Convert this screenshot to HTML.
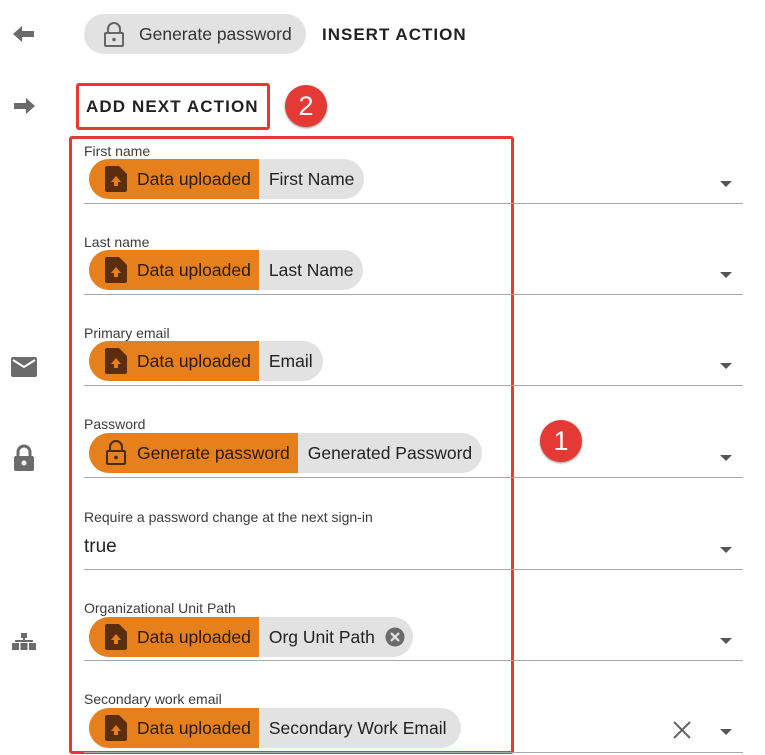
<!DOCTYPE html>
<html><head><style>
body{margin:0;width:765px;height:755px;background:#fff;font-family:"Liberation Sans",sans-serif;position:relative;overflow:hidden}
.a{position:absolute}
.lbl{position:absolute;left:84px;font-size:14px;color:#3c3c3c}
.line{position:absolute;left:84px;width:659px;height:1px;background:#a8a8a8}
.chip{position:absolute;left:89px;height:40px;border-radius:20px;background:#e2e2e2;display:flex;align-items:center;font-size:17.5px;color:#222;overflow:hidden;white-space:nowrap}
.chip .o{background:#e5801c;height:40px;display:flex;align-items:center;padding:0 8px 0 16px;color:#2a1a08}
.chip .g{padding:0 10px}
.dd{position:absolute;left:720px;width:0;height:0;border-left:6px solid transparent;border-right:6px solid transparent;border-top:6px solid #555}
.circ{position:absolute;width:42px;height:42px;border-radius:50%;background:#e53935;color:#fff;font-size:27px;text-align:center;line-height:42px;box-shadow:0 1px 2px #888}
</style></head><body>
<svg class="a" style="left:12px;top:25px" width="24" height="18" viewBox="0 0 24 18"><path d="M1 9 L10 1 V6 H22 V12 H10 V17Z" fill="#6b6b6b"/></svg>
<svg class="a" style="left:12px;top:97px" width="24" height="18" viewBox="0 0 24 18"><path d="M23 9 L14 1 V6 H2 V12 H14 V17Z" fill="#6b6b6b"/></svg>
<svg class="a" style="left:11px;top:357px" width="26" height="20"><rect width="26" height="20" rx="2" fill="#6b6b6b"/><path d="M2 3 L13 10 L24 3" stroke="#fff" stroke-width="2" fill="none"/></svg>
<svg class="a" style="left:13px;top:444px" width="22" height="28"><path d="M5 12 V8 a6 6 0 0 1 12 0 V12" stroke="#6b6b6b" stroke-width="3" fill="none"/><rect x="1" y="12" width="20" height="15" rx="2" fill="#6b6b6b"/><circle cx="11" cy="19" r="2.5" fill="#fff"/></svg>
<svg class="a" style="left:12px;top:633px" width="24" height="18" fill="#6b6b6b"><rect x="9" y="0" width="6" height="5"/><rect x="11" y="5" width="2" height="4"/><rect x="3" y="7" width="18" height="2"/><rect x="0" y="10" width="7" height="7"/><rect x="8.5" y="10" width="7" height="7"/><rect x="17" y="10" width="7" height="7"/></svg>

<div class="a" style="left:84px;top:14px;width:222px;height:40px;border-radius:20px;background:#e2e2e2"></div>
<svg class="a" style="left:103px;top:22px" width="22" height="26"><path d="M5 11 V7 a6 6 0 0 1 12 0 V11" stroke="#666" stroke-width="2" fill="none"/><rect x="2" y="11" width="18" height="13" rx="1" stroke="#666" stroke-width="2" fill="none"/><circle cx="11" cy="17.5" r="1.8" fill="#666"/></svg>
<div class="a" style="left:139px;top:24px;font-size:17.5px;color:#333">Generate password</div>
<div class="a" style="left:322px;top:25px;font-size:17px;font-weight:bold;letter-spacing:1px;color:#222">INSERT ACTION</div>

<div class="a" style="left:76px;top:83px;width:188px;height:41px;border:3px solid #e53935;border-radius:3px"></div>
<div class="a" style="left:86px;top:97px;font-size:17px;font-weight:bold;letter-spacing:1.1px;color:#222">ADD NEXT ACTION</div>
<div class="circ" style="left:285px;top:85px">2</div>
<div class="a" style="left:69px;top:136px;width:439px;height:612px;border:3px solid #e53935;border-radius:3px"></div>
<div class="circ" style="left:540px;top:420px">1</div>

<div class="lbl" style="top:143px">First name</div>
<div class="chip" style="top:159px"><span class="o"><svg width="22" height="26" style="margin-right:10px"><path d="M0 2 a2 2 0 0 1 2-2 H14 L22 8 V24 a2 2 0 0 1-2 2 H2 a2 2 0 0 1-2-2Z" fill="#5a2e0c"/><path d="M11 10 L16 16 H13 V20 H9 V16 H6Z" fill="#e5801c"/></svg>Data uploaded</span><span class="g">First Name</span></div>
<div class="dd" style="top:181px"></div><div class="line" style="top:203px"></div>

<div class="lbl" style="top:234px">Last name</div>
<div class="chip" style="top:250px"><span class="o"><svg width="22" height="26" style="margin-right:10px"><path d="M0 2 a2 2 0 0 1 2-2 H14 L22 8 V24 a2 2 0 0 1-2 2 H2 a2 2 0 0 1-2-2Z" fill="#5a2e0c"/><path d="M11 10 L16 16 H13 V20 H9 V16 H6Z" fill="#e5801c"/></svg>Data uploaded</span><span class="g">Last Name</span></div>
<div class="dd" style="top:272px"></div><div class="line" style="top:294px"></div>

<div class="lbl" style="top:325px">Primary email</div>
<div class="chip" style="top:341px"><span class="o"><svg width="22" height="26" style="margin-right:10px"><path d="M0 2 a2 2 0 0 1 2-2 H14 L22 8 V24 a2 2 0 0 1-2 2 H2 a2 2 0 0 1-2-2Z" fill="#5a2e0c"/><path d="M11 10 L16 16 H13 V20 H9 V16 H6Z" fill="#e5801c"/></svg>Data uploaded</span><span class="g">Email</span></div>
<div class="dd" style="top:363px"></div><div class="line" style="top:385px"></div>

<div class="lbl" style="top:416px">Password</div>
<div class="chip" style="top:433px"><span class="o"><svg width="22" height="26" style="margin-right:10px"><path d="M5 11 V7 a6 6 0 0 1 12 0 V11" stroke="#4a2a0c" stroke-width="2" fill="none"/><rect x="2" y="11" width="18" height="13" rx="1" stroke="#4a2a0c" stroke-width="2" fill="none"/><circle cx="11" cy="17.5" r="1.8" fill="#4a2a0c"/></svg>Generate password</span><span class="g">Generated Password</span></div>
<div class="dd" style="top:455px"></div><div class="line" style="top:477px"></div>

<div class="lbl" style="top:509px">Require a password change at the next sign-in</div>
<div class="a" style="left:84px;top:536px;font-size:19px;color:#222">true</div>
<div class="dd" style="top:547px"></div><div class="line" style="top:569px"></div>

<div class="lbl" style="top:600px">Organizational Unit Path</div>
<div class="chip" style="top:617px"><span class="o"><svg width="22" height="26" style="margin-right:10px"><path d="M0 2 a2 2 0 0 1 2-2 H14 L22 8 V24 a2 2 0 0 1-2 2 H2 a2 2 0 0 1-2-2Z" fill="#5a2e0c"/><path d="M11 10 L16 16 H13 V20 H9 V16 H6Z" fill="#e5801c"/></svg>Data uploaded</span><span class="g">Org Unit Path</span><svg width="20" height="20" style="margin-right:8px"><circle cx="10" cy="10" r="9.5" fill="#6b6b6b"/><path d="M6 6 L14 14 M14 6 L6 14" stroke="#e2e2e2" stroke-width="2.2"/></svg></div>
<div class="dd" style="top:638px"></div><div class="line" style="top:660px"></div>

<div class="lbl" style="top:691px">Secondary work email</div>
<div class="chip" style="top:708px"><span class="o"><svg width="22" height="26" style="margin-right:10px"><path d="M0 2 a2 2 0 0 1 2-2 H14 L22 8 V24 a2 2 0 0 1-2 2 H2 a2 2 0 0 1-2-2Z" fill="#5a2e0c"/><path d="M11 10 L16 16 H13 V20 H9 V16 H6Z" fill="#e5801c"/></svg>Data uploaded</span><span class="g" style="padding-right:14px">Secondary Work Email</span></div>
<svg class="a" style="left:673px;top:721px" width="18" height="18"><path d="M1 1 L17 17 M17 1 L1 17" stroke="#666" stroke-width="2"/></svg>
<div class="dd" style="top:729px"></div><div class="line" style="top:752px"></div>
</body></html>
